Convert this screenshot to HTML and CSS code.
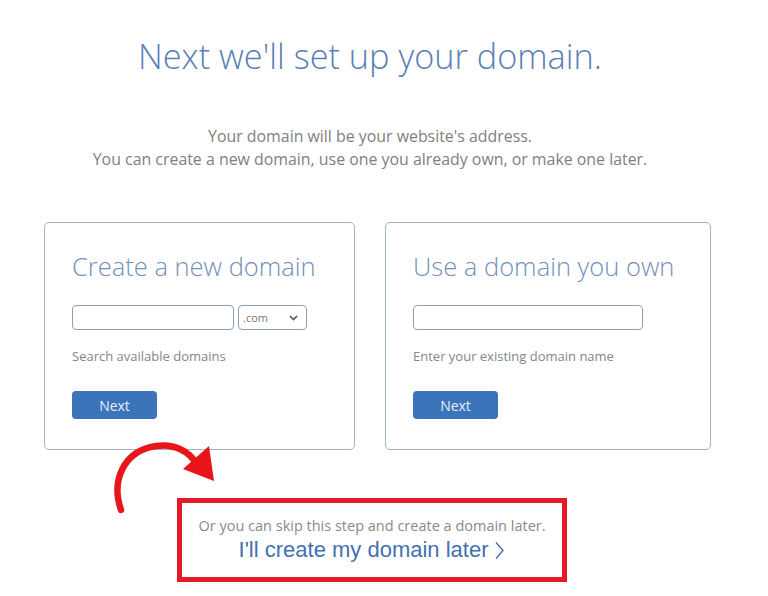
FILE: index.html
```html
<!DOCTYPE html>
<html lang="en">
<head>
<meta charset="utf-8">
<title>Set up your domain</title>
<link rel="stylesheet" href="styles.css">
</head>
<body>
<main class="page">
  <h1 class="title">Next we'll set up your domain.</h1>
  <p class="intro">Your domain will be your website's address.<br>You can create a new domain, use one you already own, or make one later.</p>

  <section class="cards">
    <div class="card card-new">
      <h2 class="card-title">Create a new domain</h2>
      <div class="field-row">
        <div class="input input-new"></div>
        <div class="select">
          <span class="select-value">.com</span>
          <svg class="select-caret" width="9" height="6" viewBox="0 0 9 6"><polyline points="1,1 4.5,4.5 8,1" fill="none" stroke="#555" stroke-width="1.6"/></svg>
        </div>
      </div>
      <p class="help">Search available domains</p>
      <button class="btn">Next</button>
    </div>
    <div class="card card-own">
      <h2 class="card-title">Use a domain you own</h2>
      <div class="field-row">
        <div class="input input-own"></div>
      </div>
      <p class="help">Enter your existing domain name</p>
      <button class="btn">Next</button>
    </div>
  </section>

  <svg class="arrow" width="768" height="596" viewBox="0 0 768 596">
    <path d="M121,510 C111,481 123,451 156,446 C175,443 189,452 196,463" fill="none" stroke="#e8151b" stroke-width="6.5" stroke-linecap="round"/>
    <polygon points="183,469 209,446 214,481" fill="#e8151b"/>
  </svg>

  <section class="skip">
    <p class="skip-text">Or you can skip this step and create a domain later.</p>
    <a class="skip-link" href="#">I'll create my domain later
      <svg class="chev" width="11" height="19" viewBox="0 0 11 19"><polyline points="2,1.5 9,9.5 2,17.5" fill="none" stroke="#4470b0" stroke-width="1.4"/></svg>
    </a>
  </section>
</main>
</body>
</html>
```
FILE: styles.css
```css
html, body {
  margin: 0;
  padding: 0;
  background: #ffffff;
}

body {
  font-family: "Open Sans", "Liberation Sans", sans-serif;
  width: 768px;
  height: 596px;
  overflow: hidden;
}

.page {
  position: relative;
  width: 768px;
  height: 596px;
  padding-top: 33px;
  box-sizing: border-box;
}

.title {
  margin: 0;
  width: 740px;
  text-align: center;
  font-size: 34.3px;
  line-height: 46px;
  font-weight: 300;
  color: #5a7fb6;
}

.intro {
  margin: 46px 0 0;
  width: 740px;
  text-align: center;
  font-size: 15.9px;
  line-height: 23px;
  font-weight: 400;
  color: #808080;
}

.cards {
  display: flex;
  gap: 30px;
  margin-top: 51px;
  padding-left: 44px;
}

.card {
  box-sizing: border-box;
  height: 228px;
  border: 1px solid #9fb2c8;
  border-radius: 5px;
  padding: 26px 0 0 27px;
}

.card-new { width: 311px; }
.card-own { width: 326px; }

.card-title {
  margin: 0;
  font-size: 25.5px;
  line-height: 34px;
  font-weight: 300;
  color: #7590ba;
  white-space: nowrap;
}

.field-row {
  display: flex;
  gap: 4px;
  margin-top: 22px;
  height: 25px;
}

.input {
  box-sizing: border-box;
  height: 25px;
  border: 1px solid #8c9fb5;
  border-radius: 4px;
  background: #fff;
}

.input-new { width: 162px; }
.input-own { width: 230px; }

.select {
  box-sizing: border-box;
  width: 69px;
  height: 25px;
  border: 1px solid #8c9fb5;
  border-radius: 4px;
  display: flex;
  align-items: center;
  justify-content: space-between;
  padding: 0 8px 0 4px;
}

.select-value {
  font-size: 11px;
  color: #777;
}

.help {
  margin: 17px 0 0;
  font-size: 13px;
  line-height: 18px;
  color: #868686;
}

.btn {
  display: block;
  margin-top: 26px;
  width: 85px;
  height: 28px;
  border: none;
  border-radius: 4px;
  background: #3b74b9;
  color: #e8eef7;
  font-family: "Open Sans", "Liberation Sans", sans-serif;
  font-size: 14px;
  padding: 0;
}

.arrow {
  position: absolute;
  left: 0;
  top: 0;
  pointer-events: none;
}

.skip {
  box-sizing: border-box;
  margin: 48px 0 0 177px;
  width: 390px;
  height: 84px;
  border: 5px solid #e31c24;
  padding-top: 13px;
  text-align: center;
}

.skip-text {
  margin: 0;
  font-size: 14.5px;
  line-height: 20px;
  font-weight: 400;
  color: #8a8a8a;
}

.skip-link {
  display: inline-flex;
  align-items: center;
  gap: 6px;
  margin-top: 1px;
  font-family: "Liberation Sans", Arial, sans-serif;
  font-size: 22px;
  line-height: 26px;
  color: #4470b0;
  text-decoration: none;
}

.chev {
  margin-top: 1px;
}
```
